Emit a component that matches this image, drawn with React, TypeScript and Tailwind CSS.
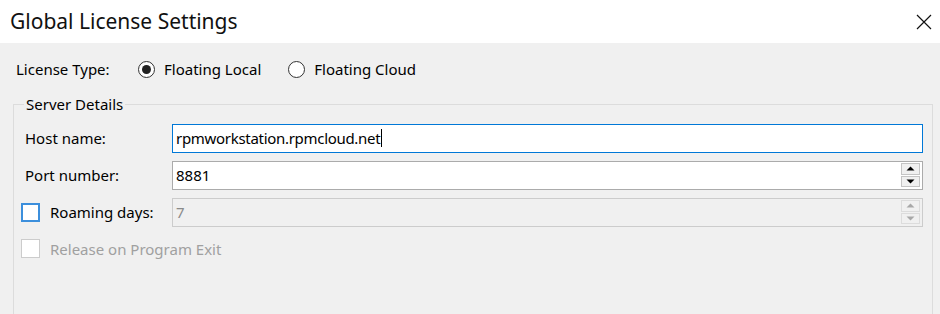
import React from 'react';

const font = { fontFamily: '"Noto Sans", "Open Sans", sans-serif' };

const Spinner: React.FC<{ disabled?: boolean }> = ({ disabled }) => (
  <div className="flex flex-col w-[19px] h-[24px] mr-[2px] gap-[1px]">
    {[0, 1].map((i) => (
      <div
        key={i}
        className={`flex-1 flex items-center justify-center border ${
          disabled ? 'border-[#dcdcdc] bg-[#f0f0f0]' : 'border-[#c4c4c4] bg-[#f0f0f0]'
        }`}
      >
        <svg width="9" height="5" viewBox="0 0 9 5">
          <path
            d={i === 0 ? 'M0.5 4.5 L4.5 0.5 L8.5 4.5 Z' : 'M0.5 0.5 L4.5 4.5 L8.5 0.5 Z'}
            fill={disabled ? '#a8a8a8' : '#000'}
          />
        </svg>
      </div>
    ))}
  </div>
);

const Radio: React.FC<{ checked?: boolean; label: string }> = ({ checked, label }) => (
  <label className="flex items-center gap-[9px]">
    <span className="w-[17px] h-[17px] rounded-full border border-[#333] bg-white flex items-center justify-center">
      {checked && <span className="w-[9px] h-[9px] rounded-full bg-[#222]" />}
    </span>
    <span>{label}</span>
  </label>
);

export default function App() {
  return (
    <div className="w-[940px] h-[314px] flex flex-col overflow-hidden text-[15px] text-black" style={font}>
      {/* Title bar */}
      <div className="h-[43px] bg-white flex items-center justify-between pl-[10px] pr-[8px] shrink-0">
        <span className="text-[21px] text-[#111]">Global License Settings</span>
        <svg width="16" height="16" viewBox="0 0 16 16">
          <path d="M1 1 L15 15 M15 1 L1 15" stroke="#111" strokeWidth="1.2" />
        </svg>
      </div>

      {/* Body */}
      <div className="flex-1 bg-[#f0f0f0] pt-[14px]">
        <div className="flex items-center pl-[16px] h-[24px]">
          <span className="w-[122px]">License Type:</span>
          <div className="flex items-center gap-[27px]">
            <Radio checked label="Floating Local" />
            <Radio label="Floating Cloud" />
          </div>
        </div>

        <fieldset className="ml-[13px] mr-[7px] mt-[12px] border border-[#dcdcdc] pl-[11px] pr-[9px] pt-[8px] pb-[80px]">
          <legend className="px-[2px] ml-[-1px]">Server Details</legend>

          <div className="grid grid-cols-[147px_1fr] gap-y-[8px] items-center">
            <span>Host name:</span>
            <div className="h-[29px] border border-[#0078d7] bg-white flex items-center pl-[3px]">
              <span className="tracking-[-0.3px]">rpmworkstation.rpmcloud.net</span>
              <span className="w-[1px] h-[18px] bg-black ml-[1px]" />
            </div>

            <span>Port number:</span>
            <div className="h-[29px] border border-[#ababab] bg-white flex items-center justify-between pl-[3px]">
              <span>8881</span>
              <Spinner />
            </div>

            <div className="flex items-center gap-[10px] ml-[-4px]">
              <span className="w-[19px] h-[19px] border-2 border-[#3c8fdc] bg-white" />
              <span>Roaming days:</span>
            </div>
            <div className="h-[29px] border border-[#cccccc] bg-[#f0f0f0] flex items-center justify-between pl-[3px] text-[#8a8a8a]">
              <span>7</span>
              <Spinner disabled />
            </div>

            <div className="flex items-center gap-[10px] ml-[-4px] col-span-2 mt-[3px]">
              <span className="w-[19px] h-[19px] border border-[#cccccc] bg-white" />
              <span className="text-[#a0a0a0]">Release on Program Exit</span>
            </div>
          </div>
        </fieldset>
      </div>
    </div>
  );
}
